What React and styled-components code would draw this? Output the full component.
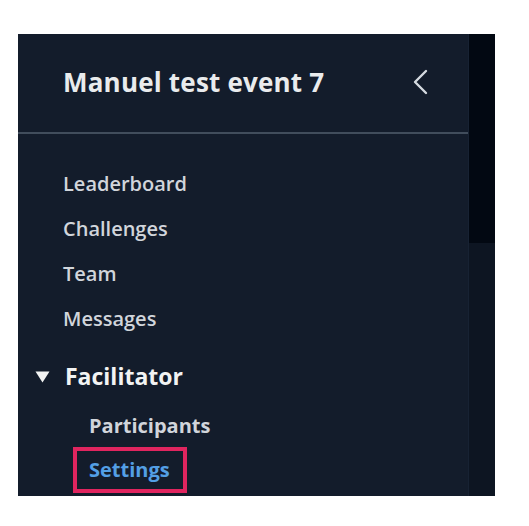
import React from "react";
import styled, { createGlobalStyle } from "styled-components";

const GlobalStyle = createGlobalStyle`
  html, body {
    margin: 0;
    padding: 0;
    background: #ffffff;
    font-family: "Open Sans", "Noto Sans", sans-serif;
  }
`;

const links = ["Leaderboard", "Challenges", "Team", "Messages"];

const App = () => {
  return (
    <Page>
      <GlobalStyle />
      <Frame>
        <Sidebar>
          <Header>
            <Title>Manuel test event 7</Title>
            <CloseButton aria-label="Close navigation">
              <svg width="16" height="26" viewBox="0 0 16 26" fill="none">
                <path
                  d="M14 2 L3 13 L14 24"
                  stroke="#d5dae0"
                  strokeWidth="2.4"
                  strokeLinecap="round"
                  strokeLinejoin="round"
                />
              </svg>
            </CloseButton>
          </Header>
          <Divider />
          <Nav>
            {links.map((l) => (
              <NavLink key={l}>{l}</NavLink>
            ))}
            <Section>
              <Caret>
                <svg width="15" height="12" viewBox="0 0 15 12">
                  <path d="M0.5 0.5 H14.5 L7.5 11.5 Z" fill="#f2f3f3" />
                </svg>
              </Caret>
              <SectionTitle>Facilitator</SectionTitle>
            </Section>
            <SubLink>Participants</SubLink>
            <SubLink active>Settings</SubLink>
          </Nav>
        </Sidebar>
        <Strip>
          <StripTop />
          <StripBottom />
        </Strip>
      </Frame>
    </Page>
  );
};

export default App;

const Page = styled.div`
  width: 529px;
  height: 526px;
  padding: 34px 0 0 18px;
  box-sizing: border-box;
`;

const Frame = styled.div`
  display: flex;
  width: 477px;
  height: 462px;
  background: #131c2b;
  overflow: hidden;
`;

const Sidebar = styled.div`
  width: 450px;
  display: flex;
  flex-direction: column;
  border-right: 1px solid #172233;
`;

const Header = styled.div`
  height: 98px;
  display: flex;
  align-items: center;
  justify-content: space-between;
  padding: 0 40px 0 45px;
  box-sizing: border-box;
`;

const Title = styled.div`
  font-size: 26px;
  font-weight: 700;
  color: #e9ebed;
  letter-spacing: 0.2px;
  margin-top: -2px;
`;

const CloseButton = styled.div`
  display: flex;
  align-items: center;
  margin-top: -2px;
`;

const Divider = styled.div`
  height: 2px;
  background: #414d5c;
`;

const Nav = styled.div`
  display: flex;
  flex-direction: column;
  padding: 27px 0 0 45px;
`;

const NavLink = styled.div`
  height: 45px;
  line-height: 45px;
  font-size: 20px;
  font-weight: 600;
  color: #d1d5db;
`;

const Section = styled.div`
  display: flex;
  align-items: center;
  height: 56px;
  margin-left: -28px;
  margin-top: 7px;
`;

const Caret = styled.div`
  display: flex;
  width: 30px;
  padding-top: 2px;
`;

const SectionTitle = styled.div`
  font-size: 23px;
  font-weight: 700;
  color: #f2f3f3;
`;

const SubLink = styled.div`
  align-self: flex-start;
  height: ${(p) => (p.active ? "38px" : "43px")};
  line-height: ${(p) => (p.active ? "38px" : "43px")};
  margin-left: ${(p) => (p.active ? "10px" : "26px")};
  padding: ${(p) => (p.active ? "0 13px 0 12px" : "0")};
  border: ${(p) => (p.active ? "4px solid #e0255f" : "none")};
  font-size: 20px;
  font-weight: 700;
  color: ${(p) => (p.active ? "#539fe5" : "#d1d5db")};
`;

const Strip = styled.div`
  flex: 1;
  display: flex;
  flex-direction: column;
`;

const StripTop = styled.div`
  height: 209px;
  background: #020812;
`;

const StripBottom = styled.div`
  flex: 1;
  background: #0d1522;
`;
